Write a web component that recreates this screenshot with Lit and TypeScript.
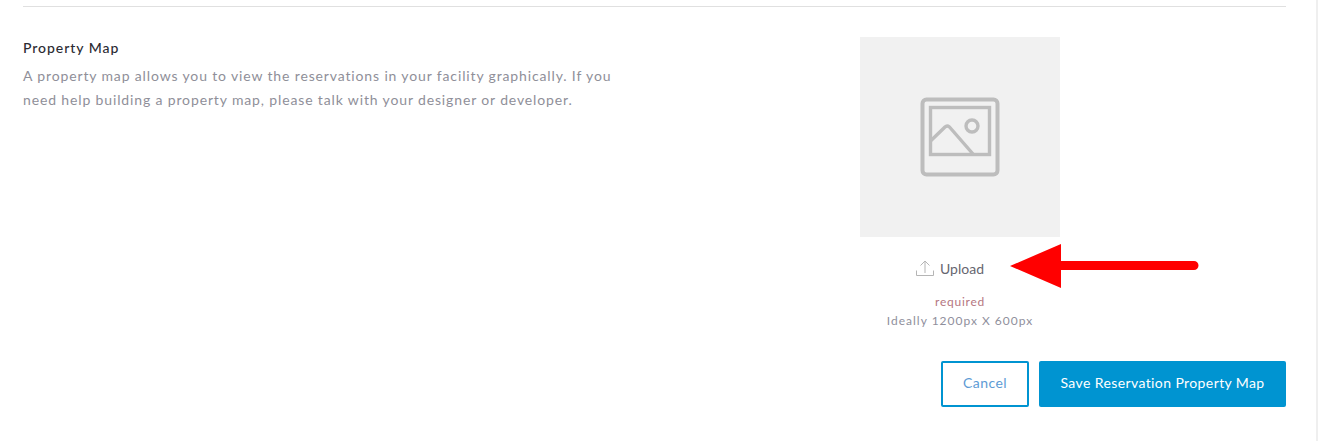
import { LitElement, html, css } from "lit";
import { customElement } from "lit/decorators.js";

@customElement("app-root")
export class AppRoot extends LitElement {
  static styles = css`
    :host { display: block; position: relative; width: 1318px; height: 441px; overflow: hidden; background: #fff; font-family: "Lato", "Open Sans", sans-serif; box-sizing: border-box; }
    .edge { position: absolute; top: 0; right: 0; width: 2px; height: 441px; background: #efefef; }
    .page { width: 1263px; margin-left: 23px; padding-top: 6px; }
    .rule { height: 1px; background: #e0e0e0; }
    .row { display: flex; justify-content: space-between; padding-top: 30px; }
    .info { width: 620px; padding-top: 2px; }
    h3 { margin: 0; font-size: 14px; line-height: 18px; font-weight: 500; color: #2b2b33; letter-spacing: 0.95px; }
    p { margin: 7px 0 0; font-size: 14px; line-height: 24px; color: #8f8f99; letter-spacing: 0.86px; }
    .media { display: flex; flex-direction: column; align-items: center; width: 200px; margin-right: 226px; }
    .thumb { width: 200px; height: 200px; background: #f1f1f1; display: flex; align-items: center; justify-content: center; }
    .upload { display: flex; align-items: center; gap: 6px; margin: 21px 20px 0 0; height: 20px; font-size: 14px; color: #666670; }
    .req { margin-top: 15px; font-size: 12px; line-height: 18px; color: #b5767f; letter-spacing: 0.75px; }
    .hint { font-size: 12px; line-height: 19px; color: #8f8f9c; letter-spacing: 1px; white-space: nowrap; }
    .actions { display: flex; justify-content: flex-end; gap: 10px; margin-top: 31px; }
    button { height: 46px; border-radius: 2px; font: inherit; font-size: 14px; letter-spacing: 0.4px; box-sizing: border-box; padding: 0 0 3px; }
    .cancel { width: 88px; background: #fff; border: 2px solid #0094d1; color: #5d9bd5; }
    .save { width: 247px; background: #0094d1; border: 0; color: #fff; }
    .arrow { position: absolute; left: 1009px; top: 243px; }
  `;

  render() {
    return html`
      <div class="page">
        <div class="rule"></div>
        <div class="row">
          <div class="info">
            <h3>Property Map</h3>
            <p>A property map allows you to view the reservations in your facility graphically. If you need help building a property map, please talk with your designer or developer.</p>
          </div>
          <div class="media">
            <div class="thumb">
              <svg width="80" height="80" viewBox="0 0 80 80" fill="none" stroke="#bdbdbd" stroke-width="3.4">
                <rect x="2.500" y="2.500" width="75" height="75" rx="4" stroke-width="4"/>
                <rect x="10.500" y="10.500" width="59" height="47"/>
                <circle cx="52" cy="29" r="6"/>
                <path d="M10.500 44 L25 30 Q27 28 29.500 30 L53 57" stroke-linejoin="round"/>
              </svg>
            </div>
            <div class="upload">
              <svg width="18" height="16" viewBox="0 0 18 16" fill="none" stroke="#b5b5b5" stroke-width="1">
                <path d="M.5 10.500V15.500H17.500V10.500M9 13V1M4.500 5.500L9 1L13.500 5.500"/>
              </svg>
              <span>Upload</span>
            </div>
            <div class="req">required</div>
            <div class="hint">Ideally 1200px X 600px</div>
          </div>
        </div>
        <div class="actions">
          <button class="cancel">Cancel</button>
          <button class="save">Save Reservation Property Map</button>
        </div>
      </div>
      <svg class="arrow" width="192" height="46" viewBox="0 0 192 46">
        <path d="M1 23L52 1V18H185a4.500 4.500 0 0 1 0 9H52V45Z" fill="#ff0000"/>
      </svg>
      <div class="edge"></div>
    `;
  }
}
